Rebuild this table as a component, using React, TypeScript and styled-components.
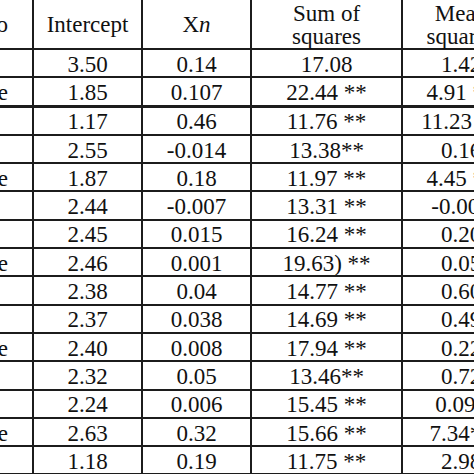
import styled, { createGlobalStyle } from 'styled-components';

const GlobalStyle = createGlobalStyle`
  html, body {
    margin: 0;
    padding: 0;
    background: #ffffff;
  }
`;

const Frame = styled.div`
  width: 474px;
  height: 474px;
  overflow: hidden;
  background: #ffffff;
`;

const Table = styled.table`
  border-collapse: collapse;
  table-layout: fixed;
  margin-left: -60px;
  margin-top: -2px;
  width: 579px;
  font-family: "Liberation Serif", "Times New Roman", serif;
  font-size: 23px;
  color: #111111;
`;

const HeadCell = styled.th<{ $first?: boolean }>`
  height: 47px;
  padding: 0;
  padding-top: 1px;
  font-weight: normal;
  line-height: 23px;
  text-align: ${(p) => (p.$first ? 'right' : 'center')};
  padding-right: ${(p) => (p.$first ? '24px' : '0')};
  border: 2px solid #1c1c1c;
  white-space: nowrap;
`;

const Cell = styled.td<{ $first?: boolean; $heavy?: boolean }>`
  height: 24.3px;
  padding: 0;
  padding-top: 2px;
  line-height: 23px;
  text-align: ${(p) => (p.$first ? 'right' : 'center')};
  padding-right: ${(p) => (p.$first ? '24px' : '0')};
  border: 2px solid #1c1c1c;
  border-bottom-width: ${(p) => (p.$heavy ? '3px' : '2px')};
  white-space: nowrap;
  overflow: hidden;
`;

const Italic = styled.i`
  font-style: italic;
`;

type Row = {
  label: string;
  intercept: string;
  xn: string;
  sum: string;
  mean: string;
};

const rows: Row[] = [
  { label: '', intercept: '3.50', xn: '0.14', sum: '17.08', mean: '1.42' },
  { label: 'Stage', intercept: '1.85', xn: '0.107', sum: '22.44 **', mean: '4.91 **' },
  { label: '', intercept: '1.17', xn: '0.46', sum: '11.76 **', mean: '11.23 **' },
  { label: '', intercept: '2.55', xn: '-0.014', sum: '13.38**', mean: '0.16' },
  { label: 'Stage', intercept: '1.87', xn: '0.18', sum: '11.97 **', mean: '4.45 **' },
  { label: '', intercept: '2.44', xn: '-0.007', sum: '13.31 **', mean: '-0.003' },
  { label: '', intercept: '2.45', xn: '0.015', sum: '16.24 **', mean: '0.20' },
  { label: 'Stage', intercept: '2.46', xn: '0.001', sum: '19.63) **', mean: '0.05' },
  { label: '', intercept: '2.38', xn: '0.04', sum: '14.77 **', mean: '0.60' },
  { label: '', intercept: '2.37', xn: '0.038', sum: '14.69 **', mean: '0.49' },
  { label: 'Stage', intercept: '2.40', xn: '0.008', sum: '17.94 **', mean: '0.22' },
  { label: '', intercept: '2.32', xn: '0.05', sum: '13.46**', mean: '0.72' },
  { label: '', intercept: '2.24', xn: '0.006', sum: '15.45 **', mean: '0.091' },
  { label: 'Stage', intercept: '2.63', xn: '0.32', sum: '15.66 **', mean: '7.34**' },
  { label: '', intercept: '1.18', xn: '0.19', sum: '11.75 **', mean: '2.98' },
];

function App() {
  return (
    <>
      <GlobalStyle />
      <Frame>
        <Table>
          <colgroup>
            <col style={{ width: 92 }} />
            <col style={{ width: 109 }} />
            <col style={{ width: 109 }} />
            <col style={{ width: 151 }} />
            <col style={{ width: 118 }} />
          </colgroup>
          <thead>
            <tr>
              <HeadCell $first>No</HeadCell>
              <HeadCell>Intercept</HeadCell>
              <HeadCell>
                X<Italic>n</Italic>
              </HeadCell>
              <HeadCell>
                Sum of
                <br />
                squares
              </HeadCell>
              <HeadCell>
                Mean
                <br />
                squares
              </HeadCell>
            </tr>
          </thead>
          <tbody>
            {rows.map((r, i) => (
              <tr key={i}>
                <Cell $first $heavy={i === 1}>{r.label}</Cell>
                <Cell $heavy={i === 1}>{r.intercept}</Cell>
                <Cell $heavy={i === 1}>{r.xn}</Cell>
                <Cell $heavy={i === 1}>{r.sum}</Cell>
                <Cell $heavy={i === 1}>{r.mean}</Cell>
              </tr>
            ))}
          </tbody>
        </Table>
      </Frame>
    </>
  );
}

export default App;
